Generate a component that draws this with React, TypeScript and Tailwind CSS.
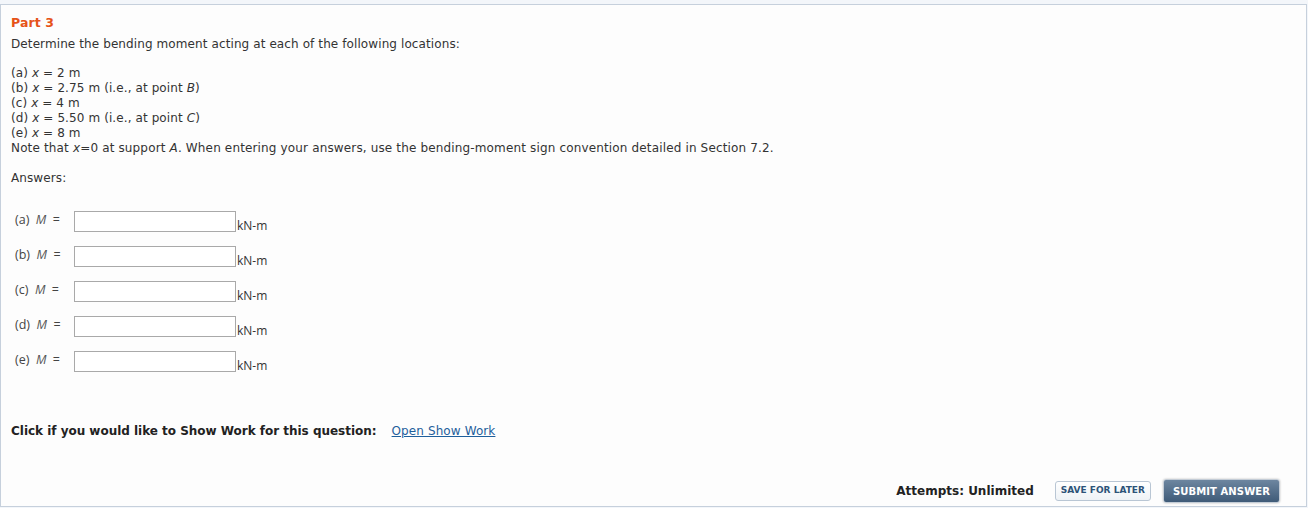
const rows = ['a', 'b', 'c', 'd', 'e'];

export default function App() {
  return (
    <div className="w-[1308px] h-[508px] bg-[#f3f6fa] pt-1 font-['DejaVu_Sans',Verdana,sans-serif] text-[12px] tracking-[0.1px] text-[#333]">
      <div className="h-[503px] w-[1307px] border border-[#c6d0dc] bg-[#fdfdfd] flex flex-col px-[10px]">
        {/* Question */}
        <div className="pt-[10px] leading-[15px]">
          <h2 className="text-[#e65318] font-bold text-[12.5px]">Part 3</h2>
          <p className="mt-[7px]">Determine the bending moment acting at each of the following locations:</p>
          <div className="mt-[14px]">
            <div>(a) <i>x</i> = 2 m</div>
            <div>(b) <i>x</i> = 2.75 m (i.e., at point <i>B</i>)</div>
            <div>(c) <i>x</i> = 4 m</div>
            <div>(d) <i>x</i> = 5.50 m (i.e., at point <i>C</i>)</div>
            <div>(e) <i>x</i> = 8 m</div>
            <div className="tracking-[0.15px]">Note that <i>x</i>=0 at support <i>A</i>. When entering your answers, use the bending-moment sign convention detailed in Section 7.2.</div>
          </div>
          <p className="mt-[15px]">Answers:</p>
        </div>

        {/* Answer fields */}
        <div className="mt-[25px] flex flex-col gap-[14px] pl-[4px] font-['Open_Sans',sans-serif] text-[12.5px] tracking-normal text-[#444]">
          {rows.map((r) => (
            <div key={r} className="flex items-start h-[21px]">
              <span className="w-[59px] pt-[1px] leading-[16px] whitespace-pre">
                ({r})  <i className="text-[#555]">M</i>  =
              </span>
              <input className="w-[162px] h-[21px] border border-[#a9a9a9] bg-white" />
              <span className="ml-[1px] pt-[7px] leading-[16px] text-[12px] text-[#333]">kN-m</span>
            </div>
          ))}
        </div>

        {/* Show work */}
        <div className="mt-[51px] flex items-center leading-[16px]">
          <span className="font-bold text-[#222] tracking-[-0.02px]">Click if you would like to Show Work for this question:</span>
          <a className="ml-[15px] text-[#1f5f9c] underline">Open Show Work</a>
        </div>

        {/* Footer */}
        <div className="mt-auto mb-[3px] flex items-center justify-end pr-[16px] gap-[12px]">
          <span className="font-bold text-[12px] tracking-normal text-[#222] mr-[9px]">Attempts: Unlimited</span>
          <button className="h-[20px] px-[5px] rounded-[3px] border border-[#b9c6d4] bg-gradient-to-b from-white to-[#eef2f6] text-[#2d5378] text-[9px] tracking-normal font-bold">
            SAVE FOR LATER
          </button>
          <button className="h-[24px] px-[9px] rounded-[3px] border border-[#c3ccd6] bg-gradient-to-b from-[#6d86a0] to-[#3f5b78] text-white text-[10px] font-bold shadow-[0_0_2px_rgba(0,0,0,0.3)]">
            SUBMIT ANSWER
          </button>
        </div>
      </div>
    </div>
  );
}
